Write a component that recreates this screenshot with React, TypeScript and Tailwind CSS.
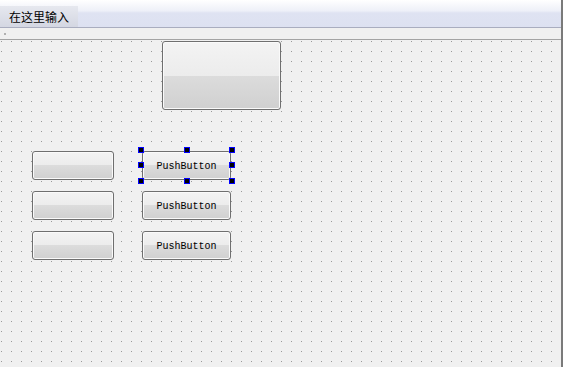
import React from "react";

const btn =
  "rounded-[3px] border border-[#6f6f6f] bg-[linear-gradient(to_bottom,#f3f3f3,#ececec_50%,#dcdcdc_50%,#d0d0d0)] shadow-[inset_0_0_0_1px_#fafafa]";

const pb =
  btn +
  " h-[29px] pt-[2px] flex items-center justify-center font-['Liberation_Mono',monospace] text-[10px] text-black";

const handle = "absolute w-[6px] h-[6px] bg-black border border-[#0000ff]";

export default function App() {
  return (
    <div className="w-[565px] h-[367px] bg-white flex flex-col overflow-hidden font-['Noto_Sans_CJK_SC',sans-serif]">
      <div className="w-[563px] h-full flex flex-col border-r-2 border-[#7a7a7a]">
        {/* menu bar */}
        <div className="h-[28px] flex items-end border-b border-[#a9adbf] bg-[linear-gradient(to_bottom,#ffffff,#eef0f8_40%,#dfe3f2_48%,#dde1f1)]">
          <div className="h-[21px] w-[78px] flex items-center pl-[9px] bg-[linear-gradient(to_bottom,#e6e8ef,#d4d7e2)] text-[12px] leading-none text-black">
            在这里输入
          </div>
        </div>
        {/* strip */}
        <div className="h-[12px] bg-[#f0f0f0] border-b border-[#a3a3a3] flex items-center pl-[4px]">
          <div className="w-[2px] h-[2px] bg-[#b0b0b0]" />
        </div>
        {/* canvas */}
        <div className="flex-1 flex flex-col pt-[1px] bg-[#f0f0f0] bg-[image:linear-gradient(to_bottom,#f0f0f0_1px,transparent_1px,transparent_2px,#f0f0f0_2px),linear-gradient(to_right,#f0f0f0_1px,#9a9a9a_1px,#9a9a9a_2px,#f0f0f0_2px)] bg-size-[10px_10px]">
          <div className={btn + " ml-[162px] w-[119px] h-[69px]"} />
          <div className="ml-[32px] mt-[41px] grid grid-cols-[82px_89px] grid-rows-[29px_29px_29px] gap-x-[28px] gap-y-[11px] w-fit">
            <div className={btn} />
            <div className={pb + " relative"}>
              PushButton
              <div className={handle + " left-[-5px] top-[-5px]"} />
              <div className={handle + " left-[41px] top-[-5px]"} />
              <div className={handle + " left-[86px] top-[-5px]"} />
              <div className={handle + " left-[-5px] top-[10px]"} />
              <div className={handle + " left-[86px] top-[10px]"} />
              <div className={handle + " left-[-5px] top-[26px]"} />
              <div className={handle + " left-[41px] top-[26px]"} />
              <div className={handle + " left-[86px] top-[26px]"} />
            </div>
            <div className={btn} />
            <div className={pb}>PushButton</div>
            <div className={btn} />
            <div className={pb}>PushButton</div>
          </div>
        </div>
      </div>
    </div>
  );
}
